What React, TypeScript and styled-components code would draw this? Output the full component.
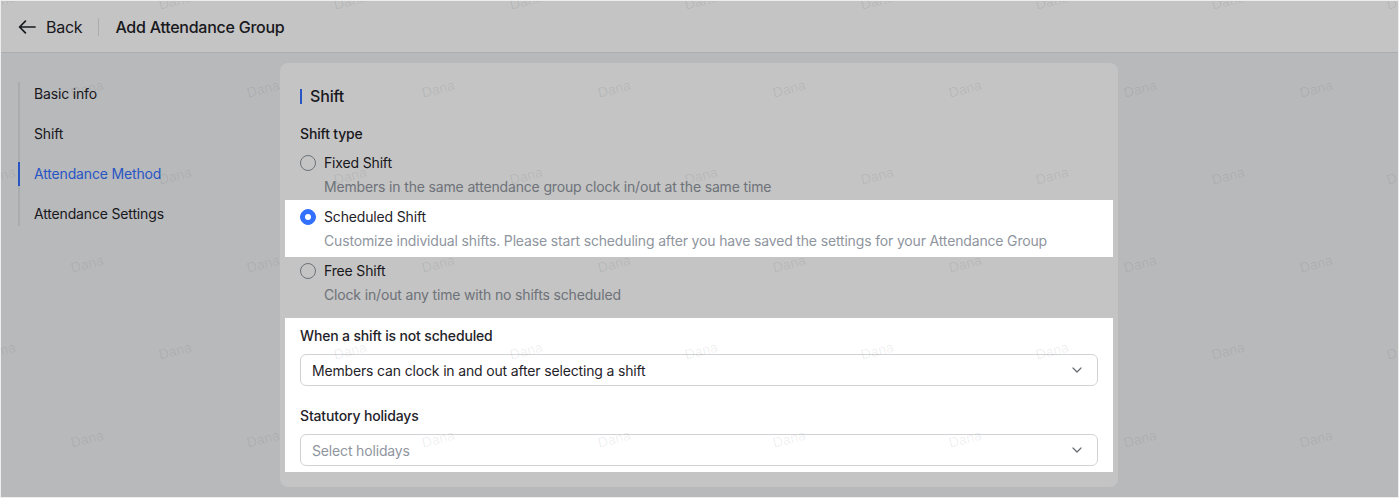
import styled, { createGlobalStyle } from "styled-components";
import { ChevronDown } from "lucide-react";

const GlobalStyle = createGlobalStyle`
  * {
    box-sizing: border-box;
  }

  body {
    margin: 0;
    font-family: Inter, "Noto Sans", "Liberation Sans", sans-serif;
    letter-spacing: -0.16px;
    color: #1f2329;
  }
`;

const Frame = styled.div`
  position: relative;
  width: 1399px;
  height: 498px;
  border: 1px solid #ededed;
  background: #f0f1f4;
  overflow: hidden;
`;

const Header = styled.header`
  display: flex;
  align-items: center;
  height: 52px;
  padding: 0 17px;
  background: #fff;
  border-bottom: 1px solid #dfe1e4;
  font-size: 16px;
  letter-spacing: -0.25px;
`;

const BackButton = styled.button`
  display: flex;
  align-items: center;
  gap: 10px;
  padding: 0;
  border: 0;
  background: none;
  font: inherit;
  letter-spacing: inherit;
  color: #1f2329;
  cursor: pointer;
`;

const Divider = styled.span`
  width: 1px;
  height: 18px;
  margin: 0 16px;
  background: #dee0e3;
`;

const PageTitle = styled.h1`
  margin: 0;
  font-size: 16px;
  font-weight: 500;
`;

const Body = styled.div`
  display: flex;
  align-items: flex-start;
  padding: 10px 0 0 17px;
`;

const Sidebar = styled.nav`
  width: 262px;
  margin-top: 19px;
`;

const NavList = styled.ul`
  display: flex;
  flex-direction: column;
  gap: 16px;
  margin: 0;
  padding: 0;
  list-style: none;
  border-left: 2px solid #dee0e3;
`;

const NavItem = styled.li<{ $active?: boolean }>`
  position: relative;
  padding: 1px 0 1px 14px;
  font-size: 14px;
  line-height: 22px;
  color: ${(p) => (p.$active ? "#3370ff" : "#1f2329")};

  &::before {
    content: "";
    position: absolute;
    left: -2px;
    top: 0;
    bottom: 0;
    width: 2px;
    background: ${(p) => (p.$active ? "#3370ff" : "transparent")};
  }
`;

const Card = styled.section`
  width: 838px;
  padding: 20px 20px 15px;
  background: #fff;
  border-radius: 8px;
`;

const CardTitle = styled.h2`
  position: relative;
  margin: 1px 0 0;
  padding-left: 10px;
  font-size: 16px;
  font-weight: 500;
  line-height: 24px;

  &::before {
    content: "";
    position: absolute;
    left: 0;
    top: 5px;
    width: 2px;
    height: 15px;
    background: #3370ff;
  }
`;

const Label = styled.div<{ $gap?: number }>`
  margin-top: ${(p) => p.$gap ?? 0}px;
  font-size: 14px;
  font-weight: 500;
  line-height: 22px;
`;

const RadioGroup = styled.div`
  display: flex;
  flex-direction: column;
  gap: 8px;
  margin-top: 7px;
`;

const Option = styled.div<{ $highlight?: boolean }>`
  ${(p) =>
    p.$highlight &&
    `
    position: relative;
    z-index: 11;
    margin: -6px -15px -5px;
    padding: 6px 15px 5px;
    background: #fff;
  `}
`;

const OptionRow = styled.label`
  display: flex;
  align-items: center;
  gap: 8px;
  font-size: 14px;
  line-height: 22px;
`;

const Radio = styled.span<{ $checked?: boolean }>`
  display: flex;
  align-items: center;
  justify-content: center;
  width: 16px;
  height: 16px;
  border-radius: 50%;
  border: 1px solid ${(p) => (p.$checked ? "#3370ff" : "#8f959e")};
  background: ${(p) => (p.$checked ? "#3370ff" : "#fff")};

  &::after {
    content: "";
    width: 6px;
    height: 6px;
    border-radius: 50%;
    background: ${(p) => (p.$checked ? "#fff" : "transparent")};
  }
`;

const OptionDesc = styled.div`
  margin-top: 2px;
  padding-left: 24px;
  font-size: 14px;
  line-height: 22px;
  color: #8f959e;
`;

const Highlight = styled.div`
  position: relative;
  z-index: 11;
  margin: 12px -15px 0;
  padding: 7px 15px 6px;
  background: #fff;
`;

const Select = styled.div<{ $placeholder?: boolean }>`
  display: flex;
  align-items: center;
  justify-content: space-between;
  height: 32px;
  margin-top: 7px;
  padding: 0 12px 0 11px;
  border: 1px solid #d0d3d6;
  border-radius: 6px;
  font-size: 14px;
  color: ${(p) => (p.$placeholder ? "#8f959e" : "#1f2329")};

  svg {
    color: #646a73;
  }
`;

const Mask = styled.div`
  position: absolute;
  inset: 0;
  z-index: 10;
  background: rgba(0, 0, 0, 0.23);
  pointer-events: none;
`;

const WatermarkLayer = styled.div`
  position: absolute;
  inset: 0;
  z-index: 20;
  overflow: hidden;
  pointer-events: none;
`;

const Mark = styled.span`
  position: absolute;
  font-family: "Liberation Sans", Arial, sans-serif;
  font-size: 14px;
  letter-spacing: 0;
  color: rgba(0, 0, 0, 0.07);
  transform: rotate(-15deg);
  transform-origin: left center;
  white-space: nowrap;
`;

const BackArrow = () => (
  <svg width="18" height="14" viewBox="0 0 18 14" fill="none">
    <path
      d="M17 7H1.6M7.4 1.2 1.6 7l5.8 5.8"
      stroke="#1f2329"
      strokeWidth="1.7"
      strokeLinecap="round"
      strokeLinejoin="round"
    />
  </svg>
);

const marks: { x: number; y: number }[] = [];
for (let row = 0; row < 7; row++) {
  const offset = row % 2 === 0 ? -18 : 70;
  for (let col = 0; col < 9; col++) {
    marks.push({ x: offset + col * 175.5, y: row * 87.6 - 4 });
  }
}

const shiftOptions = [
  {
    title: "Fixed Shift",
    desc: "Members in the same attendance group clock in/out at the same time",
  },
  {
    title: "Scheduled Shift",
    desc: "Customize individual shifts. Please start scheduling after you have saved the settings for your Attendance Group",
    checked: true,
  },
  {
    title: "Free Shift",
    desc: "Clock in/out any time with no shifts scheduled",
  },
];

const navItems = ["Basic info", "Shift", "Attendance Method", "Attendance Settings"];

export default function App() {
  return (
    <>
      <GlobalStyle />
      <Frame>
        <Header>
          <BackButton>
            <BackArrow />
            Back
          </BackButton>
          <Divider />
          <PageTitle>Add Attendance Group</PageTitle>
        </Header>

        <Body>
          <Sidebar>
            <NavList>
              {navItems.map((item) => (
                <NavItem key={item} $active={item === "Attendance Method"}>
                  {item}
                </NavItem>
              ))}
            </NavList>
          </Sidebar>

          <Card>
            <CardTitle>Shift</CardTitle>
            <Label $gap={15}>Shift type</Label>
            <RadioGroup>
              {shiftOptions.map((o) => (
                <Option key={o.title} $highlight={o.checked}>
                  <OptionRow>
                    <Radio $checked={o.checked} />
                    {o.title}
                  </OptionRow>
                  <OptionDesc>{o.desc}</OptionDesc>
                </Option>
              ))}
            </RadioGroup>

            <Highlight>
              <Label>When a shift is not scheduled</Label>
              <Select>
                Members can clock in and out after selecting a shift
                <ChevronDown size={16} strokeWidth={1.8} />
              </Select>
              <Label $gap={19}>Statutory holidays</Label>
              <Select $placeholder>
                Select holidays
                <ChevronDown size={16} strokeWidth={1.8} />
              </Select>
            </Highlight>
          </Card>
        </Body>

        <Mask />
        <WatermarkLayer>
          {marks.map((m, i) => (
            <Mark key={i} style={{ left: m.x, top: m.y }}>
              Dana
            </Mark>
          ))}
        </WatermarkLayer>
      </Frame>
    </>
  );
}
